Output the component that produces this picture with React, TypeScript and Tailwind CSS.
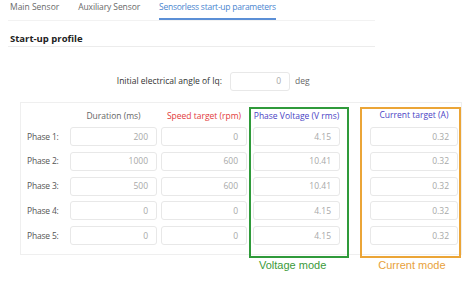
import React from "react";

const rows = [
  { name: "Phase 1:", duration: "200", speed: "0", voltage: "4.15", current: "0.32" },
  { name: "Phase 2:", duration: "1000", speed: "600", voltage: "10.41", current: "0.32" },
  { name: "Phase 3:", duration: "500", speed: "600", voltage: "10.41", current: "0.32" },
  { name: "Phase 4:", duration: "0", speed: "0", voltage: "4.15", current: "0.32" },
  { name: "Phase 5:", duration: "0", speed: "0", voltage: "4.15", current: "0.32" },
];

function Field({ value, width }: { value: string; width: string }) {
  return (
    <div
      className={`${width} h-[19px] shrink-0 rounded-[3px] border border-[#e8e8e8] bg-white flex items-center justify-end pr-[8px] text-[8.5px] text-[#a8a8a8]`}
    >
      {value}
    </div>
  );
}

export default function App() {
  return (
    <div className="w-[474px] h-[283px] bg-white overflow-hidden font-['Open_Sans',sans-serif] text-[#555]">
      {/* Tabs */}
      <div className="ml-[8px] w-[367px] h-[21px] flex gap-[19px] pl-[2px] border-b border-[#f2f2f2] text-[8.5px] leading-[12px]">
        <div className="pt-[1px] text-[#6a6a6a]">Main Sensor</div>
        <div className="pt-[1px] text-[#6a6a6a] tracking-[-0.1px]">Auxiliary Sensor</div>
        <div className="pt-[1px] text-[#4a86d0] tracking-[-0.25px] border-b-2 border-[#5b8fd6]">
          Sensorless start-up parameters
        </div>
      </div>

      {/* Section title */}
      <div className="ml-[8px] w-[367px] pl-[2px] pt-[12px] pb-[1px] border-b border-[#ececec] text-[9.5px] leading-[12px] font-bold text-[#222]">
        Start-up profile
      </div>

      {/* Initial angle */}
      <div className="mt-[25px] h-[19px] flex items-center text-[8.5px]">
        <div className="w-[222px] text-right font-medium text-[#333]">
          Initial electrical angle of Iq:
        </div>
        <div className="ml-[8px]">
          <Field value="0" width="w-[60px]" />
        </div>
        <div className="ml-[5px] text-[#666]">deg</div>
      </div>

      {/* Profile table */}
      <div className="ml-[20px] mt-[11px] w-[442px] flex items-start border border-[#efefef] pt-[4px] text-[8.5px] leading-[12px]">
        <div className="w-[47px] pl-[6px] pt-[3px] flex flex-col gap-[5px]">
          <div className="h-[12px]" />
          <div className="flex flex-col gap-[5.75px]">
            {rows.map((r) => (
              <div key={r.name} className="h-[19px] flex items-center text-[#555] tracking-[-0.2px]">
                {r.name}
              </div>
            ))}
          </div>
        </div>

        <div className="w-[93px] pl-[2px] pt-[3px] flex flex-col gap-[5px]">
          <div className="w-[87px] h-[12px] text-center text-[#666]">Duration (ms)</div>
          <div className="flex flex-col gap-[5.75px]">
            {rows.map((r) => (
              <Field key={r.name} value={r.duration} width="w-[87px]" />
            ))}
          </div>
        </div>

        <div className="w-[88px] pt-[3px] flex flex-col gap-[5px]">
          <div className="w-[86px] h-[12px] text-center text-[#e23a3a] whitespace-nowrap">
            Speed target (rpm)
          </div>
          <div className="flex flex-col gap-[5.75px]">
            {rows.map((r) => (
              <Field key={r.name} value={r.speed} width="w-[86px]" />
            ))}
          </div>
        </div>

        <div className="w-[100px] -mb-[4px] border-2 border-[#2f9a3a] pl-[2px] pt-[1px] pb-[11px] flex flex-col gap-[5px]">
          <div className="w-[87px] h-[12px] text-center text-[#4a3fc4] whitespace-nowrap">
            Phase Voltage (V rms)
          </div>
          <div className="flex flex-col gap-[5.75px]">
            {rows.map((r) => (
              <Field key={r.name} value={r.voltage} width="w-[87px]" />
            ))}
          </div>
        </div>

        <div className="ml-[11px] w-[101px] -mb-[4px] border-2 border-[#eba537] pl-[8px] pt-[1px] pb-[11px] flex flex-col gap-[5px]">
          <div className="w-[88px] h-[12px] -mt-[1px] mb-[1px] text-center text-[#4a3fc4] whitespace-nowrap">
            Current target (A)
          </div>
          <div className="flex flex-col gap-[5.75px]">
            {rows.map((r) => (
              <Field key={r.name} value={r.current} width="w-[88px]" />
            ))}
          </div>
        </div>
      </div>

      {/* Mode captions */}
      <div className="mt-[4px] flex font-['Liberation_Sans',sans-serif] text-[11px] leading-[13px]">
        <div className="ml-[259px] text-[#3a9a3a]">Voltage mode</div>
        <div className="ml-[52px] text-[#e8a13a]">Current mode</div>
      </div>
    </div>
  );
}
